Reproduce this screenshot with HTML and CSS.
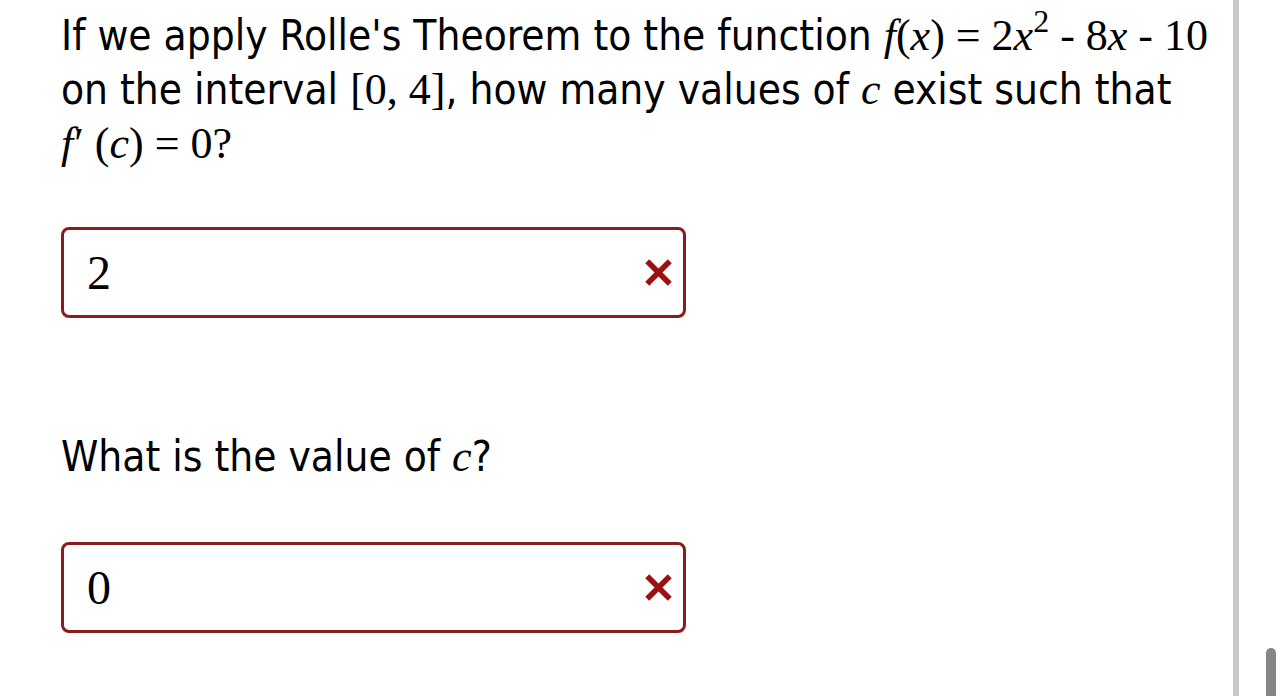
FILE: index.html
```html
<!DOCTYPE html>
<html lang="en">
<head>
<meta charset="utf-8">
<title>Rolle's Theorem</title>
<link rel="stylesheet" href="styles.css">
</head>
<body>
<div class="page">
  <main class="content">
    <p class="question">If we apply Rolle's Theorem to the function <span class="math"><i>f</i>(<i>x</i>) = 2<i>x</i><sup>2</sup> - 8<i>x</i> - 10</span> on the interval <span class="math">[0, 4]</span>, how many values of <span class="math"><i>c</i></span> exist such that <span class="math nobr"><i>f</i><span class="prime">′</span> (<i>c</i>) = 0?</span></p>
    <div class="answer">
      <span class="value">2</span>
      <svg class="wrong" viewBox="0 0 24 24" width="27" height="27" aria-label="incorrect"><path d="M2 2 L22 22 M22 2 L2 22" /></svg>
    </div>
    <p class="question second">What is the value of <span class="math"><i>c</i></span>?</p>
    <div class="answer">
      <span class="value">0</span>
      <svg class="wrong" viewBox="0 0 24 24" width="27" height="27" aria-label="incorrect"><path d="M2 2 L22 22 M22 2 L2 22" /></svg>
    </div>
  </main>
  <div class="scrollthumb"></div>
</div>
</body>
</html>
```
FILE: styles.css
```css
html, body {
  margin: 0;
  padding: 0;
  background: #ffffff;
}
.page {
  position: relative;
  width: 1284px;
  height: 696px;
  overflow: hidden;
}
.content {
  box-sizing: border-box;
  width: 1239px;
  height: 696px;
  padding: 9px 0 0 61px;
  border-right: 6px solid #c8c8c8;
  font-family: "DejaVu Sans", sans-serif;
  font-stretch: condensed;
  font-size: 42px;
  line-height: 54px;
  color: #000;
}
.question {
  margin: 0;
  width: 1165px;
}
.question.second {
  margin-top: 112px;
}
.math {
  font-family: "Liberation Serif", "Times New Roman", serif;
  font-stretch: normal;
  font-size: 44px;
}
.nobr {
  white-space: nowrap;
}
.math i {
  font-style: italic;
}
.prime {
  margin-left: 1px;
}
.math sup {
  font-size: 32px;
  line-height: 0;
  vertical-align: 0.55em;
}
.answer {
  box-sizing: border-box;
  width: 625px;
  height: 91px;
  margin-top: 56px;
  border: 3px solid #8c1c1c;
  border-radius: 8px;
  display: flex;
  align-items: center;
  justify-content: space-between;
  padding: 0 11px 0 23px;
}
.question.second + .answer {
  margin-top: 58px;
}
.value {
  font-family: "Liberation Serif", "Times New Roman", serif;
  font-stretch: normal;
  font-size: 48px;
  line-height: 1;
}
.wrong path {
  fill: none;
  stroke: #9b1111;
  stroke-width: 5;
}
.scrollthumb {
  position: absolute;
  left: 1266px;
  top: 648px;
  width: 10px;
  height: 60px;
  border-radius: 5px;
  background: #858585;
}
```
